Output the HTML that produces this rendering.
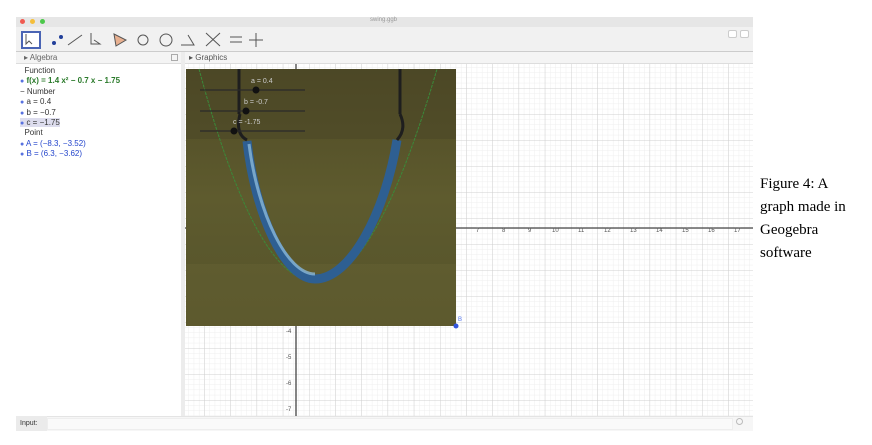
<!DOCTYPE html>
<html><head><meta charset="utf-8"><style>
*{margin:0;padding:0;box-sizing:border-box}
body{width:872px;height:445px;background:#fff;position:relative;overflow:hidden;font-family:"Liberation Sans",sans-serif}
.a{position:absolute}
.cap{position:absolute;left:760px;top:173px;font-family:"Liberation Serif",serif;font-size:15px;line-height:23px;color:#000}
.alg{font-size:8px;color:#333;line-height:10.4px;white-space:nowrap}
.alg div{height:10.4px}
.d{color:#5872e0;font-size:7px}
</style></head><body>
<div class="a" style="left:16px;top:17px;width:737px;height:10px;background:#e6e6e6"></div>
<div class="a" style="left:20px;top:19px;width:5px;height:5px;border-radius:3px;background:#f05a50"></div>
<div class="a" style="left:30px;top:19px;width:5px;height:5px;border-radius:3px;background:#f5be3a"></div>
<div class="a" style="left:40px;top:19px;width:5px;height:5px;border-radius:3px;background:#4cc84a"></div>
<div class="a" style="left:370px;top:17px;font-size:6px;color:#999">swing.ggb</div>
<div class="a" style="left:16px;top:27px;width:737px;height:25px;background:#f1f1f1;border-bottom:1px solid #ccc"></div>
<div class="a" style="left:21px;top:31px;width:20px;height:18px;border:2px solid #4a64b4;background:#fff"></div>
<svg class="a" style="left:16px;top:27px" width="260" height="25">
<g stroke="#555" fill="none" stroke-width="1">
<path d="M10 7 L10 17 L13 14 L16 17"/>
<circle cx="38" cy="16" r="2" fill="#223f9a" stroke="none"/><circle cx="45" cy="10" r="2" fill="#223f9a" stroke="none"/>
<path d="M52 18 L66 8"/><path d="M75 6 L75 17 L84 17 L78 13"/>
<path d="M98 7 L110 13 L100 19 Z" fill="#e8b090"/>
<circle cx="127" cy="13" r="5"/><circle cx="150" cy="13" r="6"/>
<path d="M165 18 L178 18 L172 8"/><path d="M190 6 L204 19 M190 19 L204 6"/>
<path d="M214 10 L226 10 M214 15 L226 15"/><path d="M240 6 L240 20 M233 13 L247 13"/>
</g></svg>
<div class="a" style="left:728px;top:30px;width:9px;height:8px;border:1px solid #ccc;background:#fff;border-radius:2px"></div>
<div class="a" style="left:740px;top:30px;width:9px;height:8px;border:1px solid #ccc;background:#fff;border-radius:2px"></div>
<div class="a" style="left:16px;top:52px;width:165px;height:12px;background:#f4f4f4;border-bottom:1px solid #ddd;font-size:8px;color:#666;padding-left:8px;line-height:12px">▸ Algebra</div>
<div class="a" style="left:171px;top:54px;width:7px;height:7px;border:1px solid #aaa"></div>
<div class="a" style="left:181px;top:52px;width:4px;height:365px;background:#ececec"></div>
<div class="a" style="left:185px;top:52px;width:568px;height:12px;background:#f4f4f4;border-bottom:1px solid #ddd;font-size:8px;color:#555;padding-left:4px;line-height:12px">▸ Graphics</div>
<div class="a alg" style="left:20px;top:66px">
<div>&nbsp; Function</div>
<div style="color:#2a7a2a;font-weight:bold"><span class="d">●</span> f(x) = 1.4 x² − 0.7 x − 1.75</div>
<div>− Number</div>
<div><span class="d">●</span> a = 0.4</div>
<div><span class="d">●</span> b = −0.7</div>
<div><span style="background:#dde"><span class="d">●</span> c = −1.75</span></div>
<div>&nbsp; Point</div>
<div style="color:#2244cc"><span class="d">●</span> A = (−8.3, −3.52)</div>
<div style="color:#2244cc"><span class="d">●</span> B = (6.3, −3.62)</div>
</div>
<svg class="a" style="left:185px;top:64px" width="568" height="352">
<defs>
<pattern id="mn" x="-7" y="-2" width="5.24" height="5.2" patternUnits="userSpaceOnUse"><path d="M0 0H6M0 0V6" stroke="#eee" stroke-width="1"/></pattern>
<pattern id="mj" x="-7" y="-2" width="26.2" height="26" patternUnits="userSpaceOnUse"><path d="M0 0H27M0 0V27" stroke="#d0d0d0" stroke-width="1"/></pattern>
<linearGradient id="g" x1="0" y1="0" x2="0" y2="1"><stop offset="0" stop-color="#4f4a26"/><stop offset=".5" stop-color="#5e5b2e"/><stop offset="1" stop-color="#55532b"/></linearGradient>
</defs>
<rect width="568" height="352" fill="#fff"/>
<rect width="568" height="352" fill="url(#mn)"/>
<rect width="568" height="352" fill="url(#mj)"/>
<line x1="111" y1="0" x2="111" y2="352" stroke="#444" stroke-width="1.3"/>
<line x1="0" y1="164" x2="568" y2="164" stroke="#444" stroke-width="1.3"/>
<g font-size="6" fill="#555"><text x="291" y="168">7</text><text x="317" y="168">8</text><text x="343" y="168">9</text><text x="367" y="168">10</text><text x="393" y="168">11</text><text x="419" y="168">12</text><text x="445" y="168">13</text><text x="471" y="168">14</text><text x="497" y="168">15</text><text x="523" y="168">16</text><text x="549" y="168">17</text>
<text x="101" y="269">-4</text><text x="101" y="295">-5</text><text x="101" y="321">-6</text><text x="101" y="347">-7</text></g>
<rect x="1" y="5" width="270" height="257" fill="url(#g)"/>
<rect x="1" y="5" width="270" height="70" fill="#4a4626" opacity=".5"/>
<rect x="1" y="200" width="270" height="62" fill="#6a6434" opacity=".4"/>
<path d="M14 5 Q128 430 252 5" fill="none" stroke="#3a8a3a" stroke-width="1" stroke-dasharray="3 1"/>
<path d="M62 77 C70 150 100 215 130 215 C165 215 200 150 212 76" fill="none" stroke="#2e5f92" stroke-width="9"/>
<path d="M64 80 C73 150 102 210 130 210" fill="none" stroke="#8ab8d8" stroke-width="3" opacity=".8"/>
<path d="M54 5 V50 M55 50 Q50 70 62 76 M215 5 V50 M215 50 Q222 65 212 76" stroke="#1e1e1e" stroke-width="3" fill="none"/>
<g stroke="#2a2a2a" stroke-width="1.3"><line x1="15" y1="26" x2="120" y2="26"/><line x1="15" y1="47" x2="120" y2="47"/><line x1="15" y1="67" x2="120" y2="67"/></g>
<circle cx="71" cy="26" r="3.5" fill="#111"/><circle cx="61" cy="47" r="3.5" fill="#111"/><circle cx="49" cy="67" r="3.5" fill="#111"/>
<g font-size="7" fill="#ccc"><text x="66" y="19">a = 0.4</text><text x="59" y="40">b = -0.7</text><text x="48" y="60">c = -1.75</text></g>
<circle cx="271" cy="262" r="2.5" fill="#3355dd"/><text x="273" y="257" font-size="6" fill="#5577ee">B</text>
</svg>
<div class="a" style="left:16px;top:416px;width:737px;height:15px;background:#f6f6f6;border-top:1px solid #e4e4e4"></div>
<div class="a" style="left:16px;top:416px;width:31px;height:15px;background:#ebebeb;font-size:7px;color:#333;line-height:15px;padding-left:4px">Input:</div>
<div class="a" style="left:47px;top:418px;width:686px;height:12px;background:#fafafa;border:1px solid #eee"></div>
<div class="a" style="left:736px;top:418px;width:7px;height:7px;border:1px solid #bbb;border-radius:4px"></div>
<div class="cap">Figure 4: A<br>graph made in<br>Geogebra<br>software</div>
</body></html>
